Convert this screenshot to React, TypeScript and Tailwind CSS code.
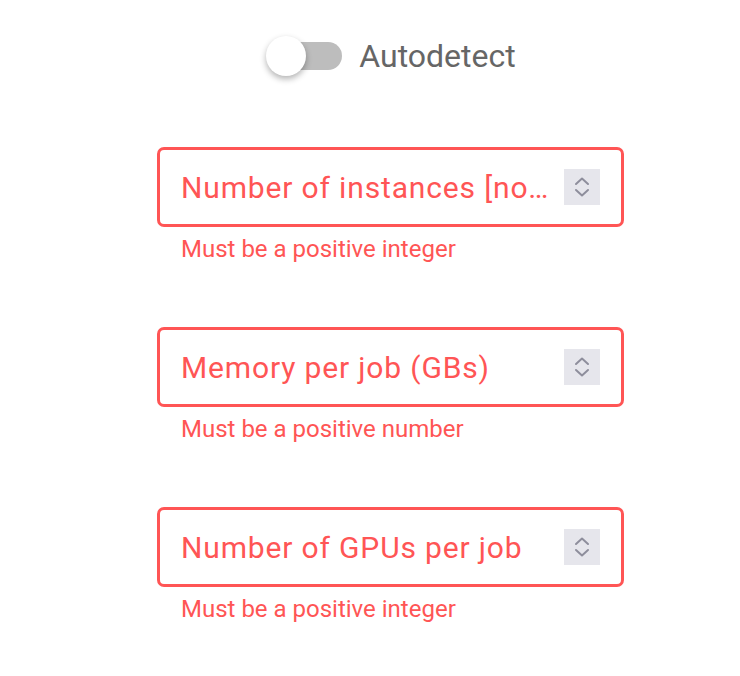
import { useState } from 'react';

const fields = [
  { label: 'Number of instances [nodes]', error: 'Must be a positive integer' },
  { label: 'Memory per job (GBs)', error: 'Must be a positive number' },
  { label: 'Number of GPUs per job', error: 'Must be a positive integer' },
];

function Spinner() {
  return (
    <div className="w-[36px] h-[36px] bg-[#e6e6ec] flex items-center justify-center shrink-0">
      <svg width="16" height="24" viewBox="0 0 16 24" fill="none" stroke="#8e8e9c" strokeWidth="2" strokeLinecap="round" strokeLinejoin="round">
        <path d="M2 9 L8 3.5 L14 9" />
        <path d="M2 15 L8 20.5 L14 15" />
      </svg>
    </div>
  );
}

export default function App() {
  const [auto, setAuto] = useState(false);

  return (
    <div className="w-[740px] h-[676px] bg-white pl-[157px] pt-[36px]" style={{ fontFamily: 'Roboto, "Noto Sans", sans-serif' }}>
      <div className="w-[467px]">
        <div className="flex items-center justify-center h-[40px] pl-[1px]">
          <button
            onClick={() => setAuto(!auto)}
            className="relative w-[76px] h-[40px] flex items-center"
          >
            <span className="block ml-[8px] w-[68px] h-[28px] rounded-full bg-[#bdbdbd]" />
            <span className="absolute left-0 top-0 w-[40px] h-[40px] rounded-full bg-white shadow-[0_3px_6px_rgba(0,0,0,0.3)]" />
          </button>
          <span className="ml-[17px] text-[32px] leading-none text-[#666666]">Autodetect</span>
        </div>

        <div className="mt-[71px] flex flex-col gap-[64px]">
          {fields.map((f) => (
            <div key={f.label}>
              <div className="h-[80px] border-[3px] border-[#ff5555] rounded-[7px] flex items-center pl-[21px] pr-[21px]">
                <span className="flex-1 min-w-0 truncate text-[30px] tracking-[0.85px] text-[#ff5555] mr-[12px]">{f.label}</span>
                <Spinner />
              </div>
              <div className="mt-[8px] pl-[24px] text-[24px] leading-[28px] text-[#ff5555]">{f.error}</div>
            </div>
          ))}
        </div>
      </div>
    </div>
  );
}
